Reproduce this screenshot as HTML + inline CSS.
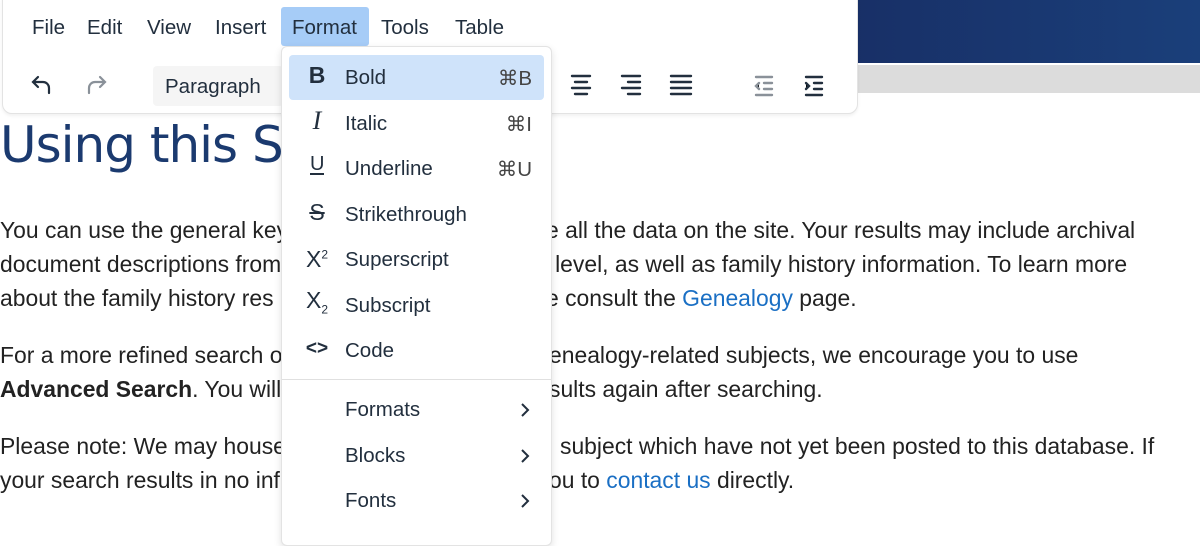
<!DOCTYPE html>
<html><head><meta charset="utf-8"><style>
*{margin:0;padding:0;box-sizing:border-box}
body{width:1200px;height:531px;overflow:hidden;background:#fff;font-family:"Liberation Sans",sans-serif;position:relative;color:#222}
.navy{position:absolute;left:840px;top:0;width:360px;height:63px;background:linear-gradient(90deg,#182f66,#1a3f7a)}
.gray{position:absolute;left:840px;top:65px;width:360px;height:28px;background:#dcdcdc}
.tb{position:absolute;left:2px;top:-10px;width:856px;height:124px;background:#fff;border:1px solid #e3e3e3;border-radius:10px;box-shadow:0 2px 3px rgba(0,0,0,.06)}
.menu span{position:absolute;top:16px;font-size:20.5px;color:#222f3e}
.fmt{position:absolute;left:281px;top:7px;width:88px;height:39px;background:#a6ccf7;border-radius:3px}
.para{position:absolute;left:153px;top:66px;width:130px;height:40px;background:#f5f5f5;border-radius:4px;font-size:20.5px;color:#222f3e;padding:9px 12px}
h1{position:absolute;left:0;top:116px;font-size:50px;font-weight:normal;color:#1b3a6f;font-family:"DejaVu Sans",sans-serif;letter-spacing:-1px}
p{position:absolute;font-size:22.9px;line-height:34.5px;white-space:nowrap;color:#222}
a{color:#1a6fc4;text-decoration:none}
.dd{position:absolute;left:281px;top:46px;width:271px;height:500px;background:#fff;border:1px solid #e3e3e3;border-radius:6px;box-shadow:0 3px 8px rgba(0,0,0,.12)}
.it{position:absolute;left:7px;width:255px;height:45px;font-size:20.5px;color:#222f3e}
.it .l{position:absolute;left:56px;top:11px}
.it .k{position:absolute;right:12px;top:11px;color:#444}
.it .i{position:absolute;left:8px;top:7px;width:40px;text-align:center;font-size:23px;font-weight:bold}
.it svg.c{position:absolute;right:14px;top:15px}
.sel{background:#cfe3fa;border-radius:4px}
.sep{position:absolute;left:0;right:0;top:332px;border-top:1px solid #e0e0e0}
</style></head><body>
<div class="navy"></div><div class="gray"></div>
<p style="left:0;top:213px">You can use the general key</p><p style="left:546px;top:213px">e all the data on the site. Your results may include archival</p>
<p style="left:0;top:247px">document descriptions from</p><p style="left:536px;top:247px">n level, as well as family history information. To learn more</p>
<p style="left:0;top:281px">about the family history res</p><p style="left:546px;top:281px">e consult the <a>Genealogy</a> page.</p>
<p style="left:0;top:338px">For a more refined search o</p><p style="left:549px;top:338px">enealogy-related subjects, we encourage you to use</p>
<p style="left:0;top:372px"><b>Advanced Search</b>. You will</p><p style="left:549px;top:372px">sults again after searching.</p>
<p style="left:0;top:429px">Please note: We may house</p><p style="left:560px;top:429px">subject which have not yet been posted to this database. If</p>
<p style="left:0;top:463px">your search results in no inf</p><p style="left:549px;top:463px">ou to <a>contact us</a> directly.</p>
<h1>Using this Site</h1>
<div class="tb"></div>
<div class="fmt"></div>
<div class="menu"><span style="left:32px">File</span><span style="left:87px">Edit</span><span style="left:147px">View</span><span style="left:215px">Insert</span><span style="left:292px">Format</span><span style="left:381px">Tools</span><span style="left:455px">Table</span></div>
<svg style="position:absolute;left:28px;top:72px" width="28" height="28" viewBox="0 0 28 28" fill="none" stroke="#222f3e" stroke-width="2.2" stroke-linecap="round"><path d="M10 5 5 10l5 5M5 10h10a6 6 0 0 1 6 6v5"/></svg>
<svg style="position:absolute;left:82px;top:72px" width="28" height="28" viewBox="0 0 28 28" fill="none" stroke="#8a9199" stroke-width="2.2" stroke-linecap="round"><path d="M18 5l5 5-5 5M23 10H13a6 6 0 0 0-6 6v5"/></svg>
<div class="para">Paragraph</div>
<svg style="position:absolute;left:570px;top:74px" width="260" height="24" viewBox="0 0 260 24" stroke-width="2.4" stroke-linecap="round"><g stroke="#222f3e"><path d="M2 2h18M5 8h12M2 14h18M5 20h12"/><path d="M52 2h18M58 8h12M52 14h18M58 20h12"/><path d="M101 2h20M101 8h20M101 14h20M101 20h20"/><path d="M236 3h16M244 9h8M244 15h8M236 21h16M236 9l3 3-3 3"/></g><g stroke="#8a9199"><path d="M186 3h16M194 9h8M194 15h8M186 21h16M189 9l-3 3 3 3"/></g></svg>
<div class="dd">
<div class="it sel" style="top:8px"><span class="i">B</span><span class="l">Bold</span><span class="k">⌘B</span></div>
<div class="it" style="top:54px"><span class="i" style="font-family:'Liberation Serif',serif;font-style:italic;font-weight:normal;font-size:26px;top:5px">I</span><span class="l">Italic</span><span class="k">⌘I</span></div>
<div class="it" style="top:99px"><span class="i" style="font-weight:normal;font-size:20px;top:9px;border-bottom:2px solid #222f3e;width:14px;left:21px;line-height:18px">U</span><span class="l">Underline</span><span class="k">⌘U</span></div>
<div class="it" style="top:145px"><span class="i" style="text-decoration:line-through;font-weight:normal">S</span><span class="l">Strikethrough</span></div>
<div class="it" style="top:190px"><span class="i" style="font-weight:normal;top:9px">X<sup style="font-size:12px">2</sup></span><span class="l">Superscript</span></div>
<div class="it" style="top:236px"><span class="i" style="font-weight:normal;top:4px">X<sub style="font-size:12px">2</sub></span><span class="l">Subscript</span></div>
<div class="it" style="top:281px"><span class="i" style="font-size:19px;top:10px">&lt;&gt;</span><span class="l">Code</span></div>
<div class="sep"></div>
<div class="it" style="top:340px"><span class="l">Formats</span><svg class="c" width="10" height="16" viewBox="0 0 10 16"><path d="M2 2l6 6-6 6" fill="none" stroke="#222f3e" stroke-width="2"/></svg></div>
<div class="it" style="top:386px"><span class="l">Blocks</span><svg class="c" width="10" height="16" viewBox="0 0 10 16"><path d="M2 2l6 6-6 6" fill="none" stroke="#222f3e" stroke-width="2"/></svg></div>
<div class="it" style="top:431px"><span class="l">Fonts</span><svg class="c" width="10" height="16" viewBox="0 0 10 16"><path d="M2 2l6 6-6 6" fill="none" stroke="#222f3e" stroke-width="2"/></svg></div>
</div>
</body></html>
